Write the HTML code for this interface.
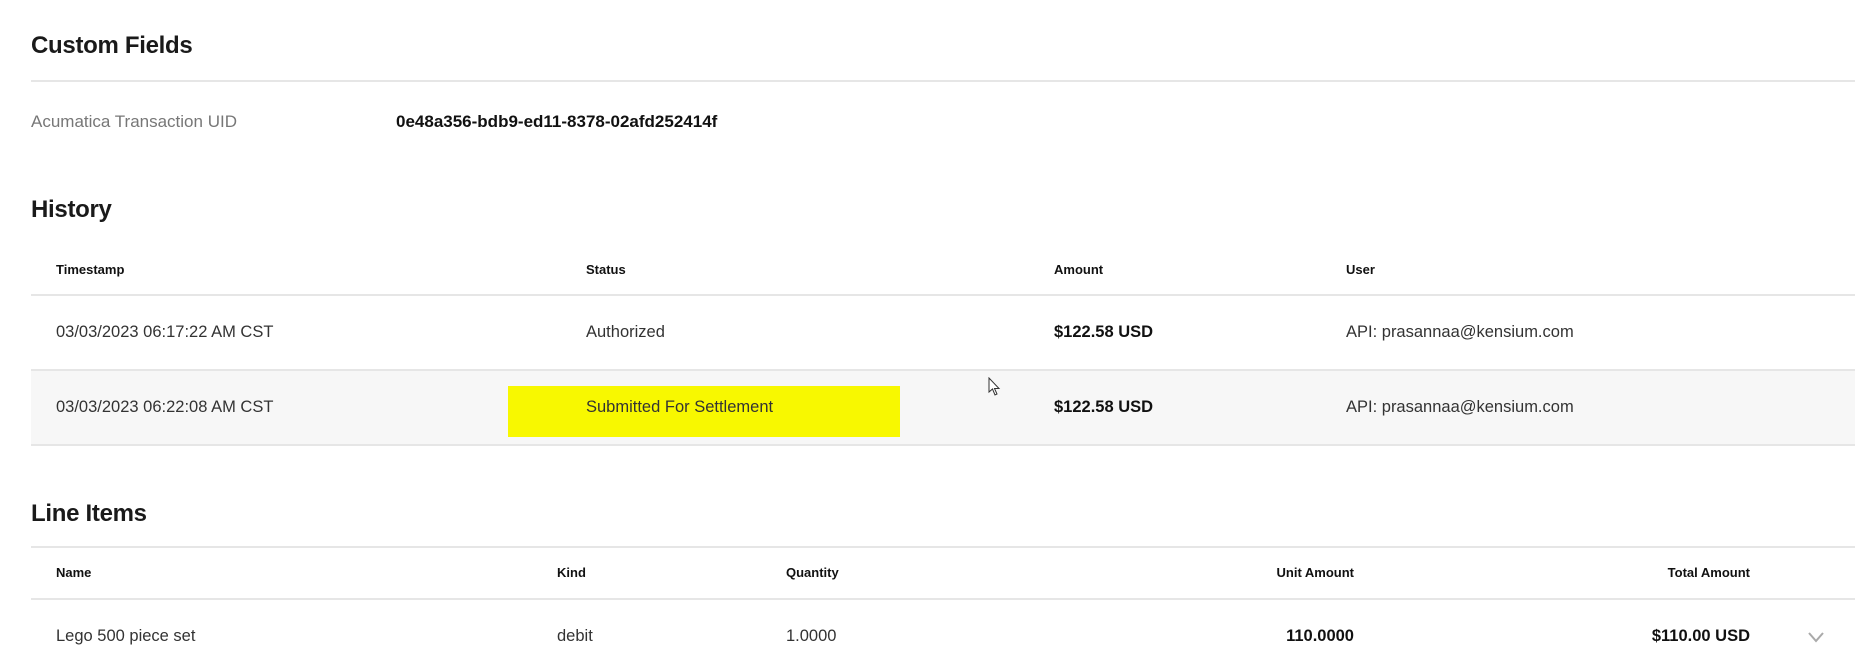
<!DOCTYPE html>
<html><head><meta charset="utf-8"><style>
*{margin:0;padding:0;box-sizing:border-box}
body{width:1870px;height:668px;background:#fff;font-family:"Liberation Sans",sans-serif;color:#1a1a1a;position:relative;overflow:hidden}
.a{position:absolute;white-space:nowrap}
h2{position:absolute;left:31px;font-size:24px;font-weight:bold;color:#1a1a1a;letter-spacing:-0.3px}
.hl{position:absolute;left:31px;width:1824px;height:2px;background:#e6e6e6}
.th{font-size:13px;font-weight:bold;color:#111}
.td{font-size:16.5px;color:#333}
.b{font-weight:bold;color:#111}
</style></head><body>
<h2 style="top:32px">Custom Fields</h2>
<div class="hl" style="top:80px"></div>
<div class="a" style="left:31px;top:112px;font-size:17px;color:#777">Acumatica Transaction UID</div>
<div class="a b" style="left:396px;top:112px;font-size:17px">0e48a356-bdb9-ed11-8378-02afd252414f</div>

<h2 style="top:196px">History</h2>
<div class="a th" style="left:56px;top:262px">Timestamp</div>
<div class="a th" style="left:586px;top:262px">Status</div>
<div class="a th" style="left:1054px;top:262px">Amount</div>
<div class="a th" style="left:1346px;top:262px">User</div>
<div class="hl" style="top:294px"></div>
<div class="a td" style="left:56px;top:323px">03/03/2023 06:17:22 AM CST</div>
<div class="a td" style="left:586px;top:323px">Authorized</div>
<div class="a td b" style="left:1054px;top:323px">$122.58 USD</div>
<div class="a td" style="left:1346px;top:323px">API: prasannaa@kensium.com</div>
<div class="hl" style="top:369px"></div>
<div class="a" style="left:31px;top:371px;width:1824px;height:73px;background:#f7f7f7"></div>
<div class="a" style="left:508px;top:386px;width:392px;height:51px;background:#f8f800"></div>
<div class="a td" style="left:56px;top:398px">03/03/2023 06:22:08 AM CST</div>
<div class="a td" style="left:586px;top:398px">Submitted For Settlement</div>
<div class="a td b" style="left:1054px;top:398px">$122.58 USD</div>
<div class="a td" style="left:1346px;top:398px">API: prasannaa@kensium.com</div>
<div class="hl" style="top:444px"></div>
<svg class="a" style="left:988px;top:377px" width="14" height="20" viewBox="0 0 14 20"><path d="M1 1 L1 15 L4.5 12 L7 18 L9 17 L6.5 11.5 L11 11.5 Z" fill="#fff" stroke="#333" stroke-width="1"/></svg>

<h2 style="top:500px">Line Items</h2>
<div class="hl" style="top:546px"></div>
<div class="a th" style="left:56px;top:565px">Name</div>
<div class="a th" style="left:557px;top:565px">Kind</div>
<div class="a th" style="left:786px;top:565px">Quantity</div>
<div class="a th" style="right:516px;top:565px">Unit Amount</div>
<div class="a th" style="right:120px;top:565px">Total Amount</div>
<div class="hl" style="top:598px"></div>
<div class="a td" style="left:56px;top:627px">Lego 500 piece set</div>
<div class="a td" style="left:557px;top:627px">debit</div>
<div class="a td" style="left:786px;top:627px">1.0000</div>
<div class="a td b" style="right:516px;top:627px">110.0000</div>
<div class="a td b" style="right:120px;top:627px">$110.00 USD</div>
<svg class="a" style="left:1806px;top:630px" width="20" height="14" viewBox="0 0 20 14"><path d="M3 3 L10 11 L17 3" fill="none" stroke="#aaa" stroke-width="2"/></svg>
</body></html>
